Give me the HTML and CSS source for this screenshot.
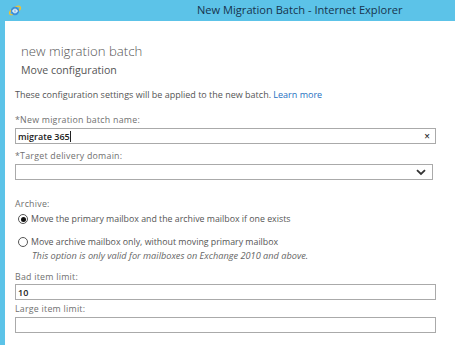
FILE: index.html
```html
<!DOCTYPE html>
<html>
<head>
<meta charset="utf-8">
<link rel="stylesheet" href="styles.css">
</head>
<body>
<div class="window">
  <div class="titlebar">
    <svg class="ie" width="14" height="14" viewBox="0 0 14 14">
      <ellipse cx="7" cy="7.5" rx="6.2" ry="2.6" transform="rotate(-35 7 7.5)" fill="none" stroke="#f2c230" stroke-width="1.4"/>
      <circle cx="7" cy="8" r="4.2" fill="#3d8fd8"/>
      <rect x="4.2" y="7.4" width="5.6" height="1.2" fill="#e8f4fb"/>
      <circle cx="7" cy="8" r="1.9" fill="none" stroke="#e8f4fb" stroke-width="1"/>
    </svg>
    <div class="title">New Migration Batch - Internet Explorer</div>
  </div>
  <div class="client">
    <div class="head">
      <div class="h1">new migration batch</div>
      <div class="h2">Move configuration</div>
    </div>
    <p class="intro">These configuration settings will be applied to the new batch. <a class="link">Learn more</a></p>
    <div class="field f1">
      <div class="label">*New migration batch name:</div>
      <div class="box text"><span class="val">migrate 365</span><span class="caret"></span><span class="clear">×</span></div>
    </div>
    <div class="field f2">
      <div class="label">*Target delivery domain:</div>
      <div class="box select">
        <svg class="chev" width="10" height="7" viewBox="0 0 10 7"><path d="M1 1.2 L5 5 L9 1.2" fill="none" stroke="#333" stroke-width="1.8"/></svg>
      </div>
    </div>
    <div class="archive">
      <div class="label">Archive:</div>
      <div class="radio-row"><span class="radio on"></span><span>Move the primary mailbox and the archive mailbox if one exists</span></div>
      <div class="radio-row second"><span class="radio"></span><span>Move archive mailbox only, without moving primary mailbox</span></div>
      <div class="note">This option is only valid for mailboxes on Exchange 2010 and above.</div>
    </div>
    <div class="field limit">
      <div class="label">Bad item limit:</div>
      <div class="box text"><span class="val">10</span></div>
    </div>
    <div class="field limit2">
      <div class="label">Large item limit:</div>
      <div class="box text"></div>
    </div>
  </div>
</div>
</body>
</html>
```
FILE: styles.css
```css
html, body {
  margin: 0;
  padding: 0;
  width: 455px;
  height: 345px;
  overflow: hidden;
}
body {
  font-family: "Open Sans", "Noto Sans", sans-serif;
  color: #555;
}
.window {
  background: #5cc3e8;
  width: 455px;
  height: 345px;
  display: flex;
  flex-direction: column;
}
.titlebar {
  height: 21px;
  display: flex;
  align-items: center;
  position: relative;
}
.ie {
  margin-left: 8px;
  margin-top: -2px;
}
.title {
  position: absolute;
  left: 197px;
  top: 2px;
  font-size: 11.1px;
  line-height: 16px;
  color: #17344e;
}
.client {
  flex: 1;
  margin-left: 5px;
  background: #fff;
  padding-left: 10px;
  padding-right: 19px;
  display: flex;
  flex-direction: column;
}
.head {
  padding-left: 6px;
  padding-top: 21px;
}
.h1 {
  font-size: 13.2px;
  font-weight: 300;
  color: #555;
  line-height: 18px;
}
.h2 {
  font-size: 10.6px;
  color: #555;
  line-height: 16px;
  margin-top: 2px;
}
.intro {
  margin: 11px 0 0 0;
  font-size: 9px;
  line-height: 12px;
  color: #555;
}
.link {
  color: #1e6fbf;
}
.label {
  font-size: 8.8px;
  letter-spacing: 0.25px;
  line-height: 12px;
  color: #707070;
}
.f1 {
  margin-top: 13px;
}
.f2 {
  margin-top: 6px;
}
.box {
  border: 1.5px solid #aaa;
  height: 14px;
  display: flex;
  align-items: center;
  padding: 0 2px;
  margin-top: 2px;
}
.text .val {
  font-size: 9px;
  color: #222;
  font-weight: 600;
}
.caret {
  width: 1px;
  height: 11px;
  background: #222;
}
.clear {
  margin-left: auto;
  font-size: 10px;
  color: #333;
  font-weight: 600;
  margin-right: 3px;
}
.select {
  margin-right: 3px;
  justify-content: flex-end;
}
.chev {
  margin-right: 4px;
}
.archive {
  margin-top: 18px;
}
.radio-row {
  display: flex;
  align-items: center;
  font-size: 8.8px;
  color: #555;
  line-height: 12px;
  margin-top: 3px;
}
.radio-row.second {
  margin-top: 11px;
}
.radio {
  width: 8px;
  height: 8px;
  border: 1px solid #555;
  border-radius: 50%;
  margin: 0 3px 0 3px;
  box-sizing: content-box;
  position: relative;
}
.radio.on::after {
  content: "";
  position: absolute;
  left: 1.5px;
  top: 1.5px;
  width: 5px;
  height: 5px;
  border-radius: 50%;
  background: #111;
}
.note {
  font-size: 9.2px;
  font-style: italic;
  color: #666;
  padding-left: 17px;
  line-height: 12px;
  margin-top: 2px;
}
.limit {
  margin-top: 9px;
}
.limit .box {
  margin-top: 1px;
}
.limit2 {
  margin-top: 3px;
}
```
